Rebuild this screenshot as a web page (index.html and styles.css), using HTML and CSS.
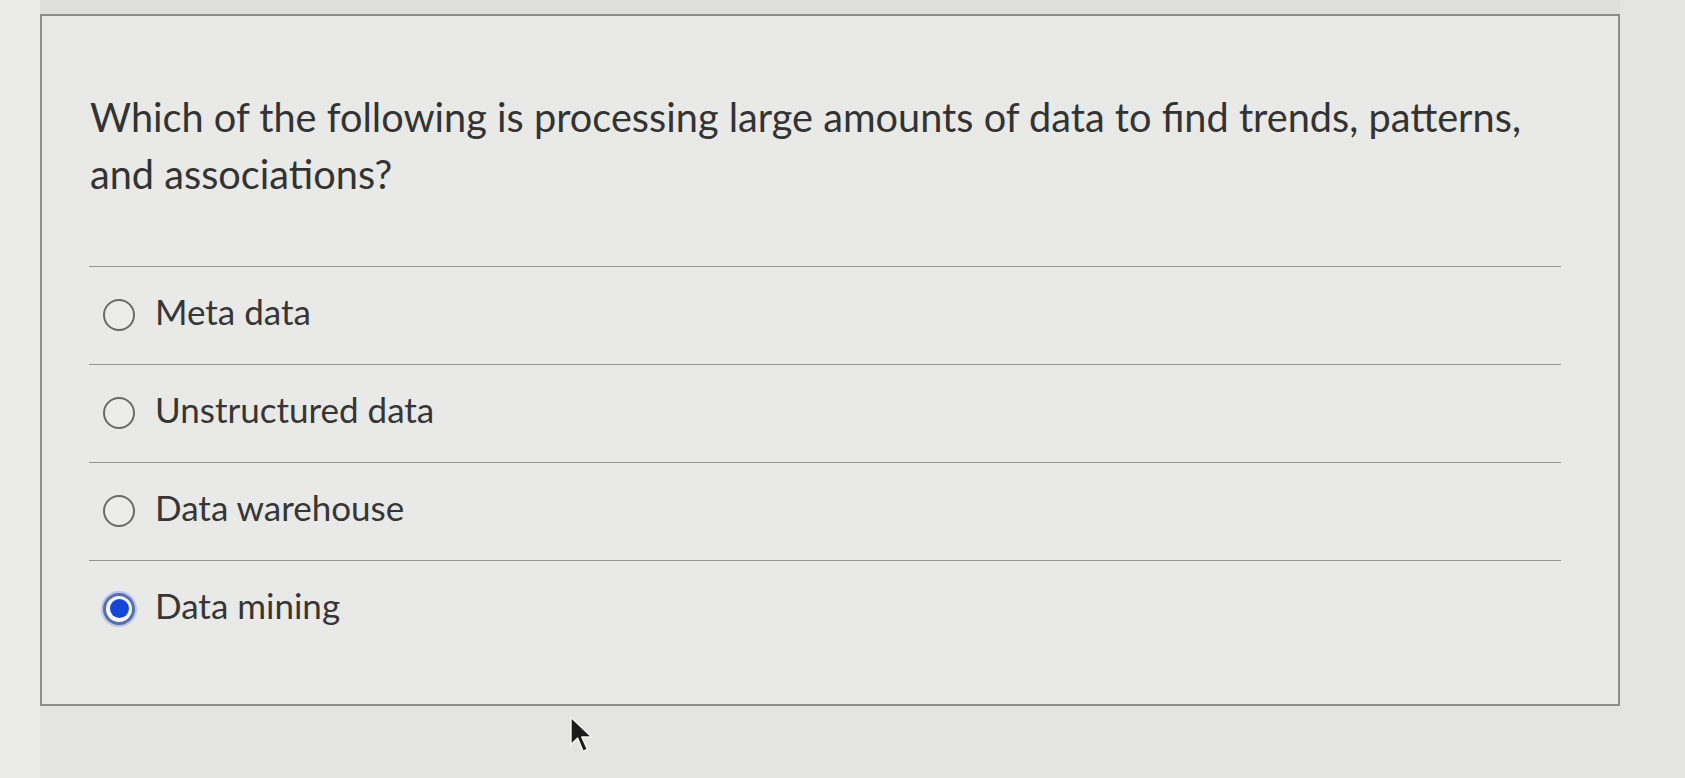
FILE: index.html
```html
<!DOCTYPE html>
<html lang="en">
<head>
<meta charset="utf-8">
<title>Quiz question</title>
<link rel="stylesheet" href="styles.css">
</head>
<body>
<div class="page">
  <div class="topstrip"></div>
  <div class="card">
    <div class="question">Which of the following is processing large amounts of data to find trends, patterns, and associations?</div>
    <div class="answers">
      <label class="answer"><span class="radio"></span><span class="label">Meta data</span></label>
      <label class="answer"><span class="radio"></span><span class="label">Unstructured data</span></label>
      <label class="answer"><span class="radio"></span><span class="label">Data warehouse</span></label>
      <label class="answer"><span class="radio checked"><span class="dot"></span></span><span class="label">Data mining</span></label>
    </div>
  </div>
  <svg class="cursor" width="28" height="40" viewBox="0 0 24 36" aria-hidden="true">
    <path d="M2 1 L2 26 L8 20 L13 32 L17 30 L12 19 L21 19 Z" fill="#1c1c1c" stroke="#f2f2f2" stroke-width="1.5" stroke-linejoin="round"/>
  </svg>
</div>
</body>
</html>
```

FILE: styles.css
```css
html, body {
  margin: 0;
  padding: 0;
}
body {
  background: #e4e4e2;
  font-family: "Lato", "Open Sans", "Liberation Sans", sans-serif;
  color: #353535;
  width: 1685px;
  height: 778px;
  overflow: hidden;
}
.page {
  position: relative;
  height: 778px;
  padding-left: 40px;
  background: linear-gradient(to right, #ebebea 0, #ebebea 40px, #e4e4e2 40px);
}
.topstrip {
  height: 14px;
  width: 1580px;
  background: #dededc;
}
.card {
  box-sizing: border-box;
  width: 1580px;
  height: 692px;
  background: #e9e9e7;
  border: 2px solid #8d8d8b;
}
.question {
  font-size: 39.7px;
  line-height: 57px;
  padding: 72px 60px 0 48px;
  color: #333;
}
.answers {
  margin-top: 64px;
  margin-left: 47px;
  width: 1472px;
}
.answer {
  display: flex;
  align-items: center;
  height: 97px;
  box-sizing: content-box;
  border-top: 1.5px solid #939391;
  padding-left: 14px;
}
.answer .label {
  font-size: 35px;
  line-height: 42px;
  margin-left: 20px;
  margin-top: -9px;
  color: #363636;
}
.radio {
  box-sizing: border-box;
  width: 32px;
  height: 32px;
  border-radius: 50%;
  border: 2px solid #6a6a6a;
  background: #ececea;
  display: flex;
  align-items: center;
  justify-content: center;
  margin-top: -2px;
  flex: none;
}
.radio.checked {
  border: 3px solid #5a6fa8;
  background: #f4f6fb;
  box-shadow: 0 0 0 2px #b6c6ee;
}
.radio .dot {
  width: 19px;
  height: 19px;
  border-radius: 50%;
  background: #1447d6;
}
.cursor {
  position: absolute;
  left: 568px;
  top: 716px;
}
```
